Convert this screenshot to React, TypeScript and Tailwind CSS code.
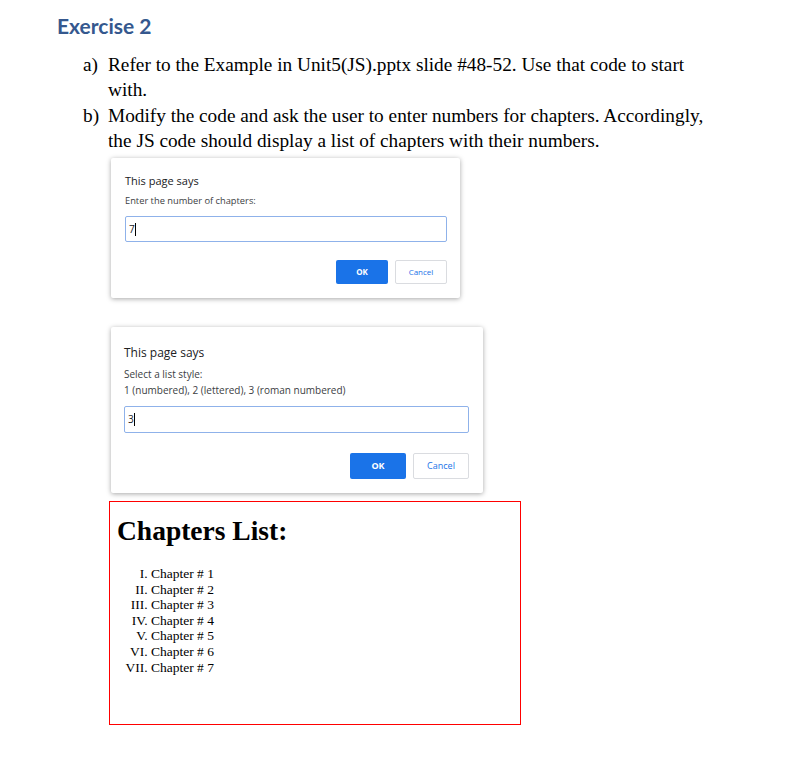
const Dialog1 = () => {
  return (
    <div className="ml-[111px] w-[349px] h-[140px] bg-white rounded-[2px] shadow-[0_1px_5px_rgba(0,0,0,0.35)] pl-[14px] pr-[13px] pt-[15px] font-['Open_Sans',sans-serif]">
      <p className="text-[11px] leading-[16px] text-[#202124]">This page says</p>
      <p className="mt-[5px] text-[9.3px] leading-[14px] text-[#3c4043]">Enter the number of chapters:</p>
      <div className="mt-[8px] h-[26px] w-full border border-[#8fb2ea] rounded-[2px] flex items-center pl-[3px] text-[10px] text-[#202124]">
        7<span className="inline-block w-px h-[13px] bg-black"></span>
      </div>
      <div className="mt-[18px] flex justify-end gap-[7px]">
        <button className="w-[52px] h-[24px] bg-[#1a73e8] rounded-[2px] text-white text-[8px] font-bold">OK</button>
        <button className="w-[52px] h-[24px] bg-white border border-[#dadce0] rounded-[2px] text-[#1a73e8] text-[8px]">Cancel</button>
      </div>
    </div>
  );
};

const Dialog2 = () => {
  return (
    <div className="ml-[111px] w-[372px] h-[166px] bg-white rounded-[2px] shadow-[0_1px_5px_rgba(0,0,0,0.35)] pl-[13px] pr-[14px] pt-[17px] font-['Open_Sans',sans-serif]">
      <p className="text-[12px] leading-[18px] text-[#202124]">This page says</p>
      <p className="mt-[4px] text-[10px] leading-[16px] text-[#3c4043]">Select a list style:</p>
      <p className="text-[10px] leading-[16px] text-[#3c4043]">1 (numbered), 2 (lettered), 3 (roman numbered)</p>
      <div className="mt-[8px] h-[27px] w-full border border-[#8fb2ea] rounded-[2px] flex items-center pl-[3px] text-[10px] text-[#202124]">
        3<span className="inline-block w-px h-[13px] bg-black"></span>
      </div>
      <div className="mt-[20px] flex justify-end gap-[7px]">
        <button className="w-[56px] h-[26px] bg-[#1a73e8] rounded-[2px] text-white text-[9px] font-bold">OK</button>
        <button className="w-[56px] h-[26px] bg-white border border-[#dadce0] rounded-[2px] text-[#1a73e8] text-[9px]">Cancel</button>
      </div>
    </div>
  );
};

const ChaptersList = () => {
  const chapters = [1, 2, 3, 4, 5, 6, 7];
  return (
    <div className="ml-[109px] w-[412px] h-[224px] border border-[#ff0000] bg-white px-[7px] pt-[13px] font-['Liberation_Serif',serif] text-black">
      <h1 className="text-[27.5px] leading-[31px] font-bold">Chapters List:</h1>
      <ol className="mt-[20px] list-[upper-roman] pl-[34px] text-[13.5px] leading-[15.6px]">
        {chapters.map((n) => (
          <li key={n}>Chapter # {n}</li>
        ))}
      </ol>
    </div>
  );
};

const App = () => {
  return (
    <div className="w-[800px] h-[767px] bg-white overflow-hidden">
      <h2 className="pl-[57px] pt-[12px] text-[21px] leading-[28px] font-bold text-[#35588e] font-['Lato',sans-serif]">
        Exercise 2
      </h2>
      <div className="mt-[13px] font-['Liberation_Serif',serif] text-[19.3px] leading-[24.5px] text-black">
        <div className="flex">
          <span className="w-[108px] pl-[83px] shrink-0">a)</span>
          <span>
            Refer to the Example in Unit5(JS).pptx slide #48-52. Use that code to start
            <br />
            with.
          </span>
        </div>
        <div className="flex mt-[2px]">
          <span className="w-[108px] pl-[83px] shrink-0">b)</span>
          <span>
            Modify the code and ask the user to enter numbers for chapters. Accordingly,
            <br />
            the JS code should display a list of chapters with their numbers.
          </span>
        </div>
      </div>
      <div className="mt-[5px]">
        <Dialog1 />
      </div>
      <div className="mt-[29px]">
        <Dialog2 />
      </div>
      <div className="mt-[8px]">
        <ChaptersList />
      </div>
    </div>
  );
};

export default App;
